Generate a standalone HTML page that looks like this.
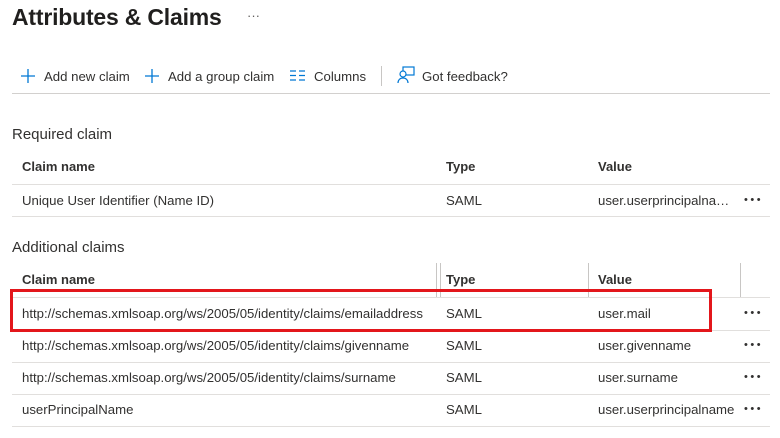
<!DOCTYPE html>
<html><head><style>
body{margin:0;width:780px;height:438px;background:#fff;font-family:"Segoe UI","Liberation Sans",sans-serif;color:#323130;position:relative;overflow:hidden}
.a{position:absolute;white-space:nowrap}
.t{font-size:13.2px;line-height:16px}
.h{font-weight:bold;font-size:13px;color:#323130}
.line{position:absolute;height:1px;background:#e1dfdd;left:12px;width:758px}
.dots{position:absolute;font-size:11px;letter-spacing:2.5px;color:#323130}
.vs{position:absolute;width:1px;background:#c8c6c4;top:263px;height:34px}
</style></head><body>
<div class="a" style="left:12px;top:4px;font-size:23px;font-weight:bold;color:#201f1e;letter-spacing:-0.2px">Attributes &amp; Claims</div>
<div class="a" style="left:247px;top:8px;font-size:13px;color:#605e5c">···</div>

<svg class="a" style="left:20px;top:68px" width="16" height="16"><path d="M8 1v14M1 8h14" stroke="#0078d4" stroke-width="1.3"/></svg>
<div class="a t" style="left:44px;top:69px">Add new claim</div>
<svg class="a" style="left:144px;top:68px" width="16" height="16"><path d="M8 1v14M1 8h14" stroke="#0078d4" stroke-width="1.3"/></svg>
<div class="a t" style="left:168px;top:69px">Add a group claim</div>
<svg class="a" style="left:290px;top:70px" width="16" height="12"><path d="M0 1h6M9 1h6M0 5.5h6M9 5.5h6M0 10h6M9 10h6" stroke="#0078d4" stroke-width="1.3"/></svg>
<div class="a t" style="left:314px;top:69px">Columns</div>
<div class="a" style="left:381px;top:66px;width:1px;height:20px;background:#c8c6c4"></div>
<svg class="a" style="left:397px;top:66px" width="18" height="18"><rect x="6" y="1" width="11" height="8" fill="none" stroke="#0078d4" stroke-width="1.2"/><circle cx="6" cy="8" r="3" fill="#fff" stroke="#0078d4" stroke-width="1.2"/><path d="M1 17c0-3 2-5 5-5s5 2 5 5" fill="none" stroke="#0078d4" stroke-width="1.2"/></svg>
<div class="a t" style="left:422px;top:69px">Got feedback?</div>
<div class="line" style="top:93px;background:#d2d0ce"></div>

<div class="a" style="left:12px;top:126px;font-size:15px">Required claim</div>
<div class="a h" style="left:22px;top:159px">Claim name</div>
<div class="a h" style="left:446px;top:159px">Type</div>
<div class="a h" style="left:598px;top:159px">Value</div>
<div class="line" style="top:184px"></div>
<div class="a t" style="left:22px;top:193px">Unique User Identifier (Name ID)</div>
<div class="a t" style="left:446px;top:193px">SAML</div>
<div class="a t" style="left:598px;top:193px;width:142px;overflow:hidden;text-overflow:ellipsis">user.userprincipalname...</div>
<div class="dots" style="left:744px;top:194px">•••</div>
<div class="line" style="top:216px"></div>

<div class="a" style="left:12px;top:239px;font-size:15px">Additional claims</div>
<div class="vs" style="left:436px"></div><div class="vs" style="left:440px"></div>
<div class="vs" style="left:588px"></div><div class="vs" style="left:740px"></div>
<div class="a h" style="left:22px;top:272px">Claim name</div>
<div class="a h" style="left:446px;top:272px">Type</div>
<div class="a h" style="left:598px;top:272px">Value</div>
<div class="line" style="top:297px"></div>

<div class="a t" style="left:22px;top:306px">http://schemas.xmlsoap.org/ws/2005/05/identity/claims/emailaddress</div>
<div class="a t" style="left:446px;top:306px">SAML</div>
<div class="a t" style="left:598px;top:306px">user.mail</div>
<div class="dots" style="left:744px;top:307px">•••</div>
<div class="line" style="top:330px"></div>
<div class="a t" style="left:22px;top:338px">http://schemas.xmlsoap.org/ws/2005/05/identity/claims/givenname</div>
<div class="a t" style="left:446px;top:338px">SAML</div>
<div class="a t" style="left:598px;top:338px">user.givenname</div>
<div class="dots" style="left:744px;top:339px">•••</div>
<div class="line" style="top:362px"></div>
<div class="a t" style="left:22px;top:370px">http://schemas.xmlsoap.org/ws/2005/05/identity/claims/surname</div>
<div class="a t" style="left:446px;top:370px">SAML</div>
<div class="a t" style="left:598px;top:370px">user.surname</div>
<div class="dots" style="left:744px;top:371px">•••</div>
<div class="line" style="top:394px"></div>
<div class="a t" style="left:22px;top:402px">userPrincipalName</div>
<div class="a t" style="left:446px;top:402px">SAML</div>
<div class="a t" style="left:598px;top:402px">user.userprincipalname</div>
<div class="dots" style="left:744px;top:403px">•••</div>
<div class="line" style="top:426px"></div>

<div class="a" style="left:10px;top:289px;width:696px;height:37px;border:3px solid #e3161b"></div>
</body></html>
